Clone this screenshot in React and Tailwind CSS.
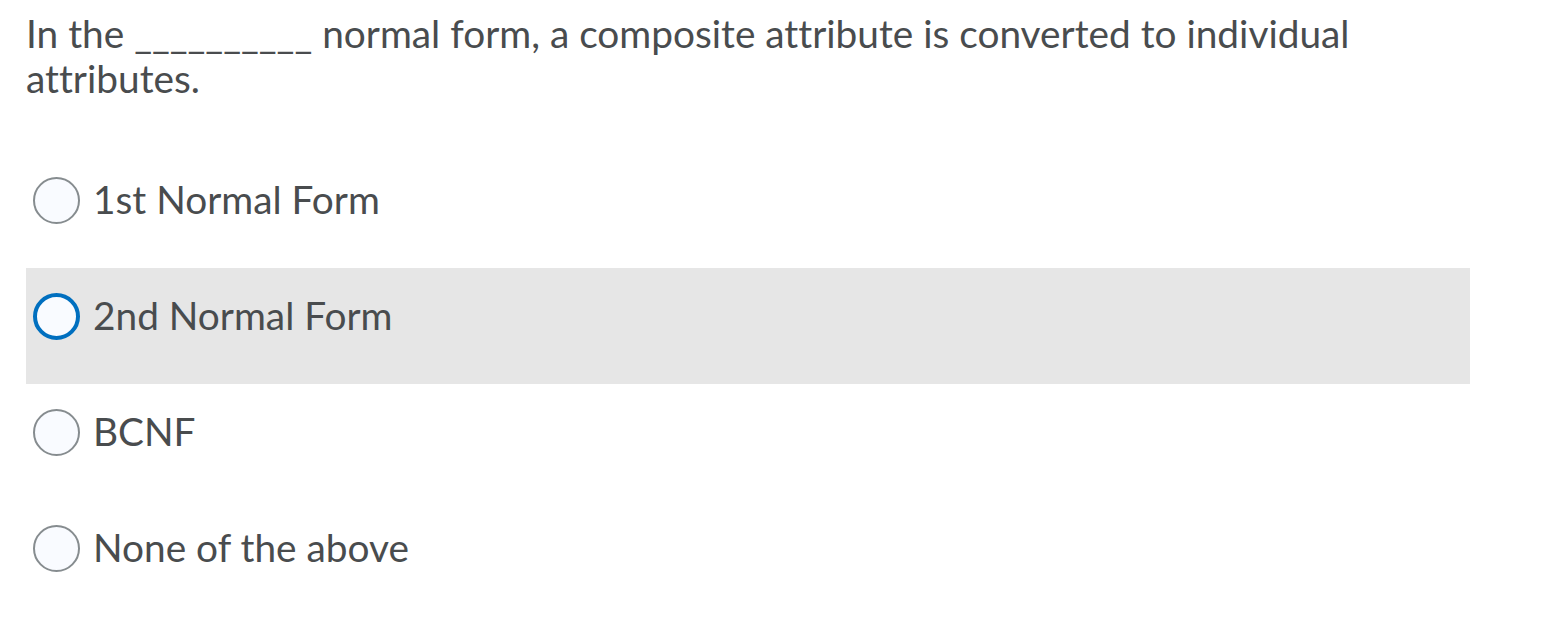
const options = [
  { id: 'a', label: '1st Normal Form' },
  { id: 'b', label: '2nd Normal Form', focused: true },
  { id: 'c', label: 'BCNF' },
  { id: 'd', label: 'None of the above' },
]

function Radio({ focused }) {
  return (
    <span
      className={
        focused
          ? 'block h-[47px] w-[47px] shrink-0 rounded-full border-[4px] border-[#006fbf] bg-[#f9fbff]'
          : 'block h-[47px] w-[47px] shrink-0 rounded-full border-2 border-[#868c8f] bg-[#f9fbff]'
      }
    />
  )
}

export default function App() {
  return (
    <div className="min-h-[624px] bg-white font-['Lato','Noto_Sans',sans-serif] text-[#494c4e] [font-variant-ligatures:none]">
      <div className="w-[1470px] pl-[26px]">
        <p className="pt-[11px] text-[38.8px] leading-[45px]">
          In the __________ normal form, a composite attribute is converted to individual attributes.
        </p>
        <div className="mt-[51px]">
          {options.map((o) => (
            <label
              key={o.id}
              className={
                'flex h-[116px] items-start gap-[13px] pl-[7px] pt-[25px] ' +
                (o.focused ? 'bg-[#e6e6e6]' : '')
              }
            >
              <Radio focused={o.focused} />
              <span className="text-[38.8px] leading-[44px]">{o.label}</span>
            </label>
          ))}
        </div>
      </div>
    </div>
  )
}
